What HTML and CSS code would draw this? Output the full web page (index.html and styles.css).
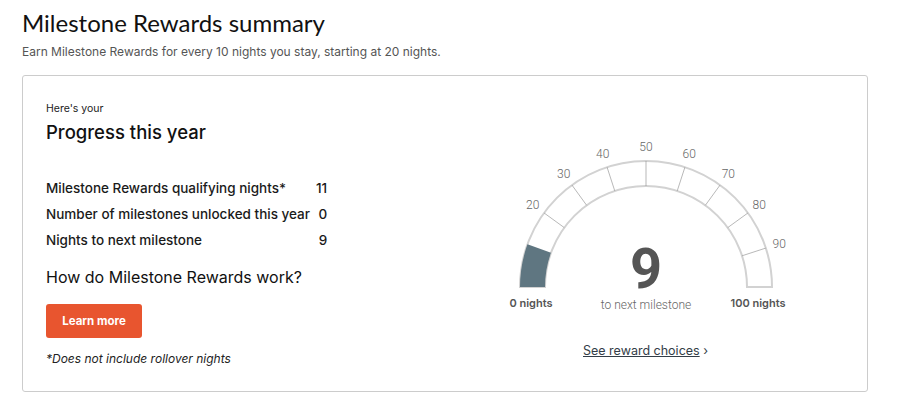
FILE: index.html
```html
<!DOCTYPE html>
<html>
  <head>
    <title>Milestone Rewards summary</title>
    <meta charset="UTF-8" />
    <link rel="stylesheet" href="styles.css">
  </head>

  <body>
    <div class="page">
      <h1 class="title">Milestone Rewards summary</h1>
      <p class="subtitle">Earn Milestone Rewards for every 10 nights you stay, starting at 20 nights.</p>

      <div class="card">
        <div class="summary">
          <div class="eyebrow">Here's your</div>
          <h2 class="heading">Progress this year</h2>

          <div class="stats">
            <div class="stat-label">Milestone Rewards qualifying nights*</div>
            <div class="stat-value">11</div>
            <div class="stat-label">Number of milestones unlocked this year</div>
            <div class="stat-value">0</div>
            <div class="stat-label">Nights to next milestone</div>
            <div class="stat-value">9</div>
          </div>

          <h3 class="question">How do Milestone Rewards work?</h3>
          <a class="btn" href="#">Learn more</a>
          <p class="footnote">*Does not include rollover nights</p>
        </div>

        <div class="gauge-col">
          <svg class="gauge" width="300" height="178" viewBox="0 0 300 178">
            <path class="band" d="M 24 152 A 126 126 0 0 1 276 152 L 251 152 A 101 101 0 0 0 49 152 Z" />
            <g class="ticks">
              <line x1="53.94" y1="120.79" x2="30.16" y2="113.07" />
              <line x1="68.29" y1="92.63" x2="48.07" y2="77.94" />
              <line x1="90.63" y1="70.29" x2="75.94" y2="50.07" />
              <line x1="118.79" y1="55.94" x2="111.07" y2="32.16" />
              <line x1="150" y1="51" x2="150" y2="26" />
              <line x1="181.21" y1="55.94" x2="188.93" y2="32.16" />
              <line x1="209.37" y1="70.29" x2="224.06" y2="50.07" />
              <line x1="231.71" y1="92.63" x2="251.93" y2="77.94" />
              <line x1="246.06" y1="120.79" x2="269.84" y2="113.07" />
            </g>
            <path class="fill" d="M 24 152 A 126 126 0 0 1 31.45 109.32 L 54.97 117.79 A 101 101 0 0 0 49 152 Z" />
            <g class="marks">
              <text x="36.74" y="69.71">20</text>
              <text x="67.71" y="38.74">30</text>
              <text x="106.74" y="18.85">40</text>
              <text x="150" y="12">50</text>
              <text x="193.26" y="18.85">60</text>
              <text x="232.29" y="38.74">70</text>
              <text x="263.26" y="69.71">80</text>
              <text x="283.15" y="108.74">90</text>
            </g>
            <text class="count" x="150" y="153">9</text>
            <text class="count-label" x="150" y="170">to next milestone</text>
            <text class="end-label" x="35" y="168">0 nights</text>
            <text class="end-label" x="262" y="168">100 nights</text>
          </svg>
          <a class="reward-link" href="#"><span>See reward choices</span> &rsaquo;</a>
        </div>
      </div>
    </div>
  </body>
</html>
```

FILE: styles.css
```css
* {
  box-sizing: border-box;
  margin: 0;
}

body {
  background: #ffffff;
  font-family: "Inter", "Liberation Sans", sans-serif;
  color: #1a1a1a;
}

.page {
  padding: 8px 33px 0 22px;
}

.title {
  font-family: "Lato", "Liberation Sans", sans-serif;
  font-size: 24px;
  font-weight: 400;
  line-height: 30px;
  color: #111111;
}

.subtitle {
  margin-top: 6px;
  font-size: 12px;
  line-height: 16px;
  color: #555555;
}

.card {
  display: flex;
  margin-top: 15px;
  border: 1px solid #cccccc;
  border-radius: 3px;
  padding: 26px 23px 25px 23px;
}

/* left side */
.summary {
  width: 401px;
}

.eyebrow {
  font-size: 10.5px;
  line-height: 14px;
  color: #222222;
}

.heading {
  margin-top: 4px;
  font-size: 18.5px;
  font-weight: 500;
  line-height: 24px;
  color: #111111;
}

.stats {
  display: grid;
  grid-template-columns: max-content max-content;
  column-gap: 6px;
  row-gap: 9px;
  margin-top: 36px;
  font-size: 13.5px;
  font-weight: 500;
  line-height: 17px;
}

.stat-value {
  justify-self: end;
}

.question {
  margin-top: 18px;
  font-size: 16px;
  font-weight: 400;
  line-height: 20px;
  color: #111111;
}

.btn {
  display: inline-block;
  margin-top: 17px;
  width: 96px;
  height: 34px;
  line-height: 34px;
  text-align: center;
  background-color: #e8552f;
  border-radius: 3px;
  color: #ffffff;
  font-size: 11.5px;
  font-weight: 700;
  text-decoration: none;
}

.footnote {
  margin-top: 14px;
  font-size: 12px;
  font-style: italic;
  line-height: 14px;
  color: #222222;
}

/* right side */
.gauge-col {
  flex: 1;
  display: flex;
  flex-direction: column;
  align-items: center;
  padding-top: 33px;
}

.gauge {
  display: block;
  font-family: Roboto, "Liberation Sans", sans-serif;
}

.band {
  fill: #ffffff;
  stroke: #d2d2d2;
  stroke-width: 2;
}

.ticks line {
  stroke: #9a9a9a;
  stroke-width: 0.7;
}

.fill {
  fill: #5f7681;
}

.marks text {
  font-size: 12px;
  font-weight: 300;
  fill: #666666;
  text-anchor: middle;
  dominant-baseline: central;
}

.count {
  font-size: 56px;
  font-weight: 700;
  fill: #555555;
  text-anchor: middle;
}

.count-label {
  font-size: 12px;
  font-weight: 300;
  fill: #666666;
  text-anchor: middle;
  dominant-baseline: central;
}

.end-label {
  font-family: "Inter", "Liberation Sans", sans-serif;
  font-size: 11px;
  font-weight: 600;
  fill: #555555;
  text-anchor: middle;
  dominant-baseline: central;
}

.reward-link {
  margin-top: 30px;
  font-size: 12.5px;
  color: #333d47;
  text-decoration: none;
}

.reward-link span {
  text-decoration: underline;
}
```
